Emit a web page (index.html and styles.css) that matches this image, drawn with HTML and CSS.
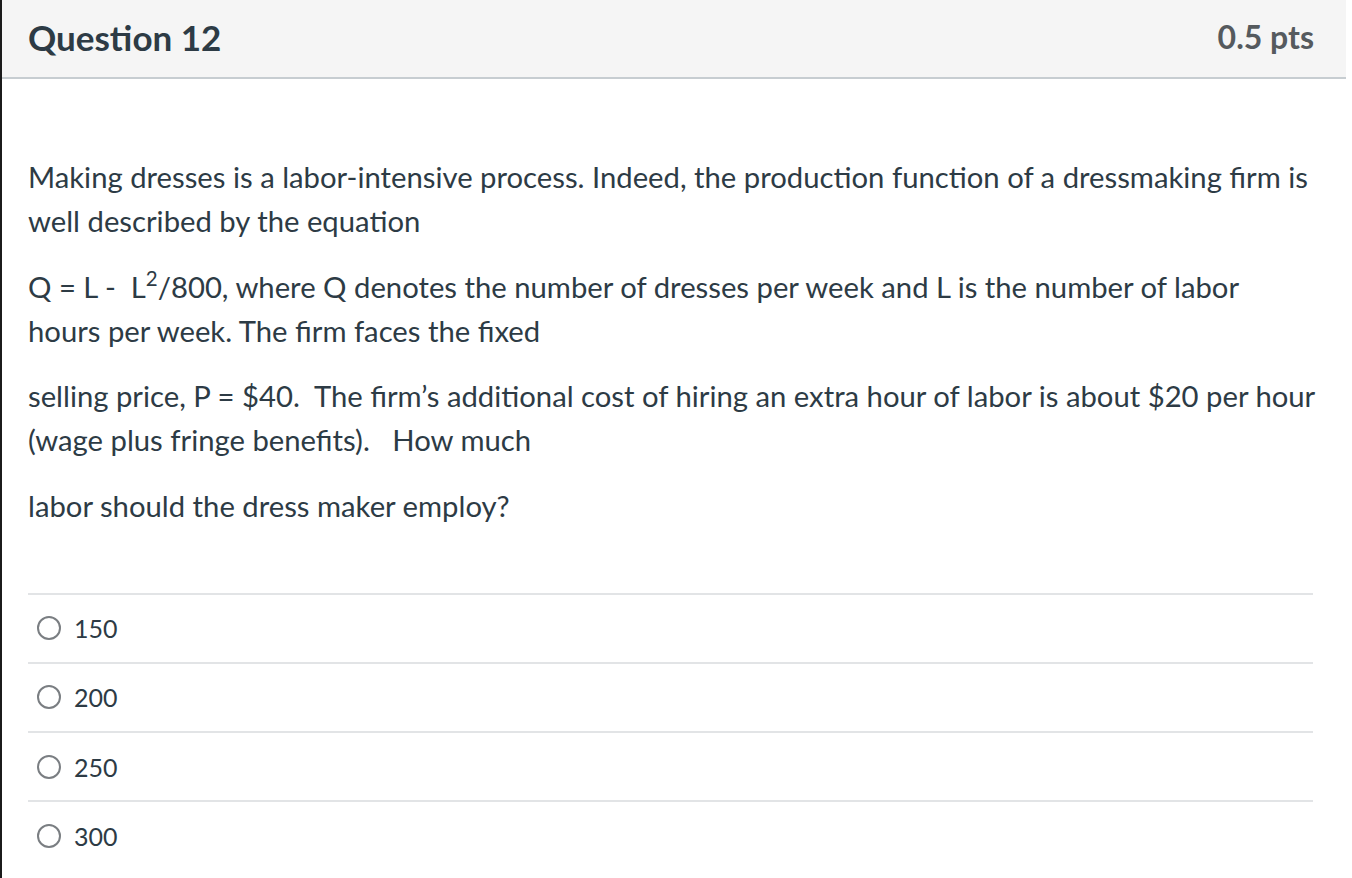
FILE: index.html
```html
<!DOCTYPE html>
<html lang="en">
<head>
<meta charset="utf-8">
<title>Question 12</title>
<link rel="stylesheet" href="styles.css">
</head>
<body>
<div class="question">
  <div class="q-header">
    <h2 class="q-title">Question 12</h2>
    <div class="q-points">0.5 pts</div>
  </div>
  <div class="q-body">
    <div class="q-text">
      <p>Making dresses is a labor-intensive process. Indeed, the production function of a dressmaking firm is well described by the equation</p>
      <p>Q = L -&nbsp; L<sup>2</sup>/800, where Q denotes the number of dresses per week and L is the number of labor hours per week. The firm faces the fixed</p>
      <p>selling price, P = $40.&nbsp; The firm’s additional cost of hiring an extra hour of labor is about $20 per hour (wage plus fringe benefits).&nbsp;&nbsp; How much</p>
      <p>labor should the dress maker employ?</p>
    </div>
    <div class="answers">
      <label class="answer"><span class="radio"></span><span class="answer-text">150</span></label>
      <label class="answer"><span class="radio"></span><span class="answer-text">200</span></label>
      <label class="answer"><span class="radio"></span><span class="answer-text">250</span></label>
      <label class="answer"><span class="radio"></span><span class="answer-text">300</span></label>
    </div>
  </div>
</div>
</body>
</html>
```
FILE: styles.css
```css
html, body {
  margin: 0;
  padding: 0;
  background: #ffffff;
}
body {
  font-family: Lato, "Open Sans", "Liberation Sans", sans-serif;
  color: #2d3b45;
  font-variant-ligatures: common-ligatures;
}
.question {
  width: 1346px;
  border-left: 2px solid #1b1b1b;
  min-height: 878px;
  box-sizing: border-box;
}
.q-header {
  display: flex;
  align-items: center;
  justify-content: space-between;
  height: 77px;
  background: #f5f5f5;
  border-bottom: 2px solid #c7cdd1;
  padding: 0 32px 0 26px;
}
.q-title {
  margin: 0;
  font-size: 35px;
  font-weight: 700;
  color: #2d3b45;
  position: relative;
  top: -2px;
}
.q-points {
  font-size: 32px;
  font-weight: 700;
  color: #555a5e;
  position: relative;
  top: -2px;
}
.q-body {
  padding: 76px 29px 0 26px;
}
.q-text p {
  margin: 0 0 21.5px;
  font-size: 29.25px;
  line-height: 44px;
}
.q-text sup {
  font-size: 70%;
  line-height: 0;
  vertical-align: 0.6em;
}
.answers {
  margin-top: 65px;
  margin-right: 4px;
}
.answer {
  display: flex;
  align-items: center;
  gap: 13px;
  height: 67.3px;
  border-top: 2px solid #e2e4e6;
  padding-left: 9px;
}
.radio {
  width: 20px;
  height: 20px;
  border: 2px solid #7a7e82;
  border-radius: 50%;
  background: #fff;
}
.answer-text {
  font-size: 25px;
}
```
